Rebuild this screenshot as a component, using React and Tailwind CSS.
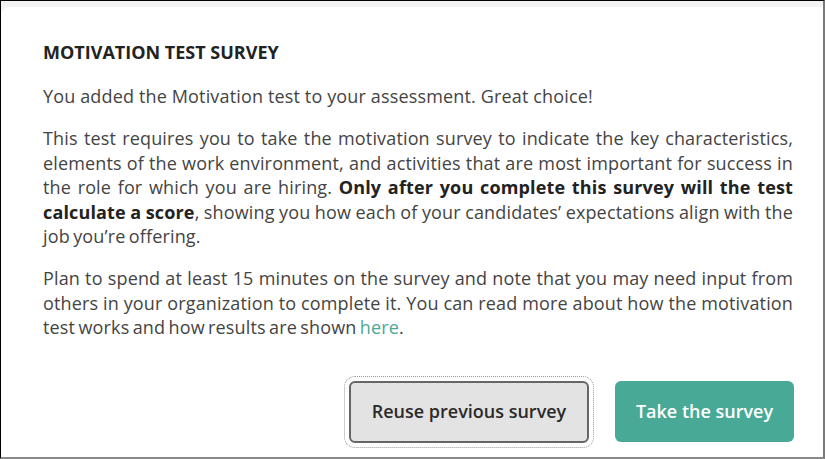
import React from "react";

export default function App() {
  return (
    <div
      className="w-[825px] h-[459px] overflow-hidden border-l border-t border-black border-r-2 border-r-[#7a7a7a] border-b-2 border-b-[#8a8a8a] bg-[#f3f3f3] pt-[6px]"
      style={{ fontFamily: '"Open Sans", "Liberation Sans", sans-serif' }}
    >
      {/* Tarjeta del modal */}
      <div className="h-full bg-white rounded-tl-lg pl-[42px] pr-[30px] pt-[33px]">
        <h2 className="text-[18px] leading-6 font-bold text-[#222]">
          MOTIVATION TEST SURVEY
        </h2>

        <p className="mt-[20px] text-[18px] leading-[24.5px] tracking-[0.15px] text-[#444]">
          You added the Motivation test to your assessment. Great choice!
        </p>

        <p className="mt-[17.5px] text-[18px] leading-[24.5px] tracking-[0.15px] [word-spacing:-1.5px] text-justify text-[#444]">
          This test requires you to take the motivation survey to indicate the key characteristics,
          elements of the work environment, and activities that are most important for success in
          the role for which you are hiring.{" "}
          <strong className="font-bold text-[#222]">
            Only after you complete this survey will the test calculate a score
          </strong>
          , showing you how each of your candidates’ expectations align with the job you’re
          offering.
        </p>

        <p className="mt-[17.5px] text-[18px] leading-[24.5px] tracking-[0.15px] [word-spacing:-1.5px] text-justify text-[#444]">
          Plan to spend at least 15 minutes on the survey and note that you may need input from
          others in your organization to complete it. You can read more about how the motivation
          test works and how results are shown{" "}
          <a href="#" className="text-[#4aa995]">
            here
          </a>
          .
        </p>

        {/* Botones */}
        <div className="mt-[41px] flex justify-end gap-[26px] -mr-[1px]">
          <button className="w-[240px] h-[62px] rounded-md border-2 border-[#666] bg-[#e3e3e3] text-[18px] font-semibold text-[#2a2a2a] outline-1 outline-dotted outline-[#999] outline-offset-[4px]">
            Reuse previous survey
          </button>
          <button className="w-[179px] h-[61px] rounded-md bg-[#48a996] text-[18px] font-semibold text-white">
            Take the survey
          </button>
        </div>
      </div>
    </div>
  );
}
